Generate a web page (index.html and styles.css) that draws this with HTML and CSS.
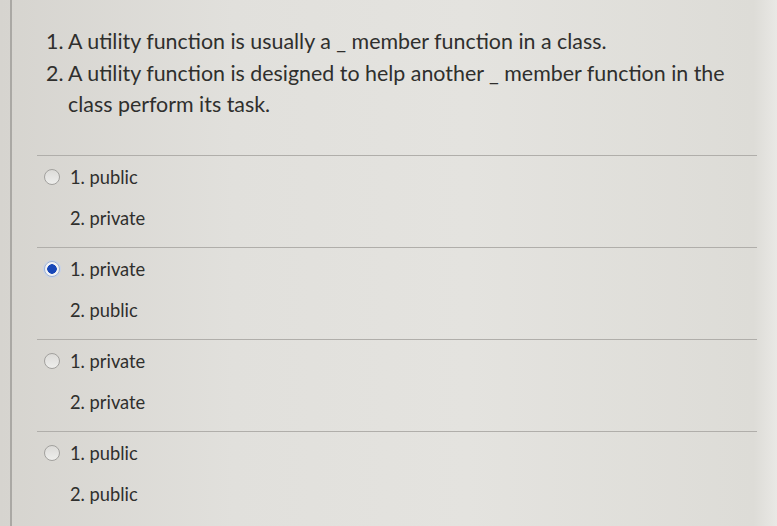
FILE: index.html
```html
<!DOCTYPE html>
<html lang="en">
<head>
  <meta charset="UTF-8">
  <title>Quiz</title>
  <link rel="stylesheet" href="styles.css">
</head>
<body>
  <div class="quiz">
    <ol class="question">
      <li><span class="num">1.</span><span>A utility function is usually a _ member function in a class.</span></li>
      <li><span class="num">2.</span><span>A utility function is designed to help another _ member function in the class perform its task.</span></li>
    </ol>

    <div class="answers">
      <label class="option">
        <span class="radio"></span>
        <span class="lines"><span>1. public</span><span>2. private</span></span>
      </label>
      <label class="option">
        <span class="radio checked"></span>
        <span class="lines"><span>1. private</span><span>2. public</span></span>
      </label>
      <label class="option">
        <span class="radio"></span>
        <span class="lines"><span>1. private</span><span>2. private</span></span>
      </label>
      <label class="option">
        <span class="radio"></span>
        <span class="lines"><span>1. public</span><span>2. public</span></span>
      </label>
    </div>
  </div>
</body>
</html>
```

FILE: styles.css
```css
:root {
  --text: #2f2f2d;
  --rule: #b0aeaa;
}
* { box-sizing: border-box; }
body {
  margin: 0;
  background: linear-gradient(90deg, #d6d4cf 0%, #e1e0dc 30%, #e4e3df 60%, #dddcd7 97%, #e9e8e5 100%);
  font-family: Lato, "Open Sans", sans-serif;
  color: var(--text);
}
.quiz {
  margin-left: 10px;
  border-left: 2px solid #aaa8a4;
  min-height: 526px;
  padding: 26px 0 0 25px;
}
.question {
  list-style: none;
  margin: 0;
  padding: 0 0 0 9px;
  width: 720px;
  font-size: 21.4px;
  line-height: 31.5px;
}
.question li { display: flex; }
.question .num { flex: 0 0 22px; }
.answers {
  margin-top: 34px;
  width: 720px;
}
.option {
  display: flex;
  border-top: 1px solid var(--rule);
  padding: 1px 0 8px 7px;
  font-size: 18.3px;
  line-height: 41px;
}
.lines {
  display: flex;
  flex-direction: column;
}
.radio {
  flex: 0 0 16px;
  width: 16px;
  height: 16px;
  margin: 12px 10px 0 0;
  border: 1px solid #a2a19e;
  border-radius: 50%;
  background: linear-gradient(#dcdbd8, #eeeeec);
}
.radio.checked {
  border-color: #9fb3d6;
  box-shadow: 0 0 0 1px #c7d3ea;
  background: radial-gradient(circle, #1747b8 0 4.5px, #f2f2f2 5px);
}
```
